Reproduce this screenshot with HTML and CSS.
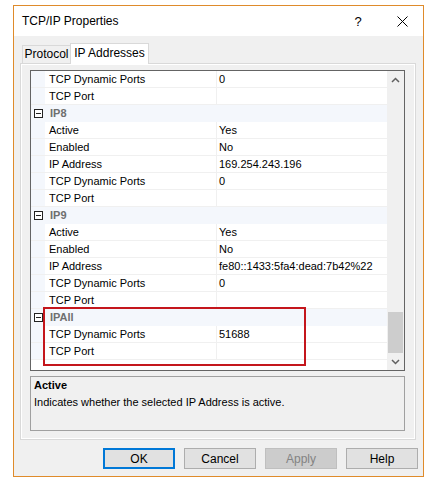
FILE: index.html
```html
<!DOCTYPE html>
<html lang="en">

<head>
    <meta charset="UTF-8" />
    <title>TCP/IP Properties</title>
    <link rel="stylesheet" href="styles.css">
</head>

<body>
    <div class="window">
        <div class="titlebar">
            <span class="title">TCP/IP Properties</span>
            <div class="caption-btn help-btn">?</div>
            <div class="caption-btn close-btn">
                <svg width="11" height="11" viewBox="0 0 11 11">
                    <path d="M0.5 0.5 L10.5 10.5 M10.5 0.5 L0.5 10.5" stroke="#000" stroke-width="1" fill="none" />
                </svg>
            </div>
        </div>

        <div class="dialog">
            <div class="tabs">
                <div class="tab">Protocol</div>
                <div class="tab selected">IP Addresses</div>
            </div>

            <div class="panel">
                <div class="grid">
                    <div class="rows">
                        <div class="row"><div class="gutter"></div><div class="name">TCP Dynamic Ports</div><div class="value">0</div></div>
                        <div class="row"><div class="gutter"></div><div class="name">TCP Port</div><div class="value"></div></div>

                        <div class="row category"><div class="gutter"><svg class="minus" width="9" height="9" viewBox="0 0 9 9"><rect x="0.5" y="0.5" width="8" height="8" fill="#fff" stroke="#222" /><path d="M2 4.5 H7" stroke="#222" /></svg></div><div class="cat-name">IP8</div></div>
                        <div class="row"><div class="gutter"></div><div class="name">Active</div><div class="value">Yes</div></div>
                        <div class="row"><div class="gutter"></div><div class="name">Enabled</div><div class="value">No</div></div>
                        <div class="row"><div class="gutter"></div><div class="name">IP Address</div><div class="value">169.254.243.196</div></div>
                        <div class="row"><div class="gutter"></div><div class="name">TCP Dynamic Ports</div><div class="value">0</div></div>
                        <div class="row"><div class="gutter"></div><div class="name">TCP Port</div><div class="value"></div></div>

                        <div class="row category"><div class="gutter"><svg class="minus" width="9" height="9" viewBox="0 0 9 9"><rect x="0.5" y="0.5" width="8" height="8" fill="#fff" stroke="#222" /><path d="M2 4.5 H7" stroke="#222" /></svg></div><div class="cat-name">IP9</div></div>
                        <div class="row"><div class="gutter"></div><div class="name">Active</div><div class="value">Yes</div></div>
                        <div class="row"><div class="gutter"></div><div class="name">Enabled</div><div class="value">No</div></div>
                        <div class="row"><div class="gutter"></div><div class="name">IP Address</div><div class="value">fe80::1433:5fa4:dead:7b42%22</div></div>
                        <div class="row"><div class="gutter"></div><div class="name">TCP Dynamic Ports</div><div class="value">0</div></div>
                        <div class="row"><div class="gutter"></div><div class="name">TCP Port</div><div class="value"></div></div>

                        <div class="row category"><div class="gutter"><svg class="minus" width="9" height="9" viewBox="0 0 9 9"><rect x="0.5" y="0.5" width="8" height="8" fill="#fff" stroke="#222" /><path d="M2 4.5 H7" stroke="#222" /></svg></div><div class="cat-name">IPAll</div></div>
                        <div class="row"><div class="gutter"></div><div class="name">TCP Dynamic Ports</div><div class="value">51688</div></div>
                        <div class="row"><div class="gutter"></div><div class="name">TCP Port</div><div class="value"></div></div>
                    </div>

                    <div class="scrollbar">
                        <div class="arrow">
                            <svg width="9" height="6" viewBox="0 0 9 6"><path d="M1 5 L4.5 1.5 L8 5" stroke="#606060" stroke-width="1.5" fill="none" /></svg>
                        </div>
                        <div class="track"><div class="thumb"></div></div>
                        <div class="arrow">
                            <svg width="9" height="6" viewBox="0 0 9 6"><path d="M1 1 L4.5 4.5 L8 1" stroke="#606060" stroke-width="1.5" fill="none" /></svg>
                        </div>
                    </div>

                    <div class="highlight"></div>
                </div>

                <div class="description">
                    <div class="desc-title">Active</div>
                    <div class="desc-text">Indicates whether the selected IP Address is active.</div>
                </div>
            </div>

            <div class="buttons">
                <button class="btn default">OK</button>
                <button class="btn">Cancel</button>
                <button class="btn" disabled>Apply</button>
                <button class="btn">Help</button>
            </div>
        </div>
    </div>
</body>

</html>
```

FILE: styles.css
```css
body,
html {
    margin: 0;
    padding: 0;
    background: #fff;
    font-family: "Liberation Sans", Arial, sans-serif;
}

.window {
    box-sizing: border-box;
    width: 411px;
    height: 472px;
    margin: 5px 0 0 13px;
    border: 1px solid #df8b2b;
    display: flex;
    flex-direction: column;
    background: #f0f0f0;
}

.titlebar {
    height: 30px;
    background: #fff;
    display: flex;
    align-items: center;
    flex-shrink: 0;
}

.title {
    flex: 1;
    padding-left: 8px;
    font-size: 12px;
    color: #000;
}

.caption-btn {
    height: 30px;
    display: flex;
    align-items: center;
    justify-content: center;
    font-size: 13px;
}

.help-btn {
    width: 46px;
}

.close-btn {
    width: 42px;
}

.dialog {
    flex: 1;
    padding: 7px 7px 0 6px;
    display: flex;
    flex-direction: column;
}

.tabs {
    display: flex;
    align-items: flex-end;
    height: 20px;
    padding-left: 2px;
}

.tab {
    box-sizing: border-box;
    height: 18px;
    width: 49px;
    border: 1px solid #d9d9d9;
    border-bottom: none;
    font-size: 12px;
    line-height: 17px;
    text-align: center;
    color: #000;
    background: #f0f0f0;
}

.tab.selected {
    position: relative;
    height: 21px;
    width: 79px;
    margin-bottom: -1px;
    margin-left: -1px;
    background: #fff;
    line-height: 18px;
    z-index: 1;
}

.panel {
    box-sizing: border-box;
    height: 377px;
    border: 1px solid #d9d9d9;
    box-shadow: inset 0 0 0 1px #fff;
    padding: 6px 0 0 9px;
}

.grid {
    position: relative;
    box-sizing: border-box;
    width: 375px;
    height: 301px;
    border: 1px solid #646464;
    display: flex;
    background: #fff;
}

.rows {
    width: 356px;
    font-size: 11px;
    color: #000;
}

.row {
    display: flex;
    box-sizing: border-box;
    height: 17px;
    line-height: 16px;
    border-bottom: 1px solid #f0f0f0;
}

.gutter {
    width: 14px;
    background: #f4f7fc;
    display: flex;
    align-items: center;
    justify-content: center;
}

.name {
    box-sizing: border-box;
    width: 172px;
    padding-left: 4px;
    border-right: 1px solid #f0f0f0;
    white-space: nowrap;
}

.value {
    flex: 1;
    padding-left: 2px;
    white-space: nowrap;
}

.row.category {
    background: #f4f7fc;
    border-bottom-color: #f4f7fc;
}

.cat-name {
    padding-left: 5px;
    font-weight: bold;
    color: #6f6f6f;
}

.minus {
    display: block;
}

.scrollbar {
    width: 17px;
    background: #f0f0f0;
    display: flex;
    flex-direction: column;
}

.arrow {
    height: 17px;
    display: flex;
    align-items: center;
    justify-content: center;
}

.track {
    flex: 1;
    display: flex;
    flex-direction: column;
    justify-content: flex-end;
}

.thumb {
    height: 41px;
    margin: 0 1px;
    background: #cdcdcd;
}

.highlight {
    position: absolute;
    left: 12px;
    top: 236px;
    box-sizing: border-box;
    width: 263px;
    height: 59px;
    border: 2px solid #c4161c;
}

.description {
    box-sizing: border-box;
    width: 375px;
    height: 55px;
    margin-top: 5px;
    border: 1px solid #a0a0a0;
    padding-left: 3px;
    font-size: 11px;
    line-height: 17px;
    color: #000;
}

.desc-title {
    font-weight: bold;
}

.buttons {
    display: flex;
    justify-content: flex-end;
    gap: 9px;
    margin-top: 8px;
    margin-right: -2px;
}

.btn {
    box-sizing: border-box;
    width: 72px;
    height: 21px;
    padding: 0;
    border: 1px solid #adadad;
    background: #e1e1e1;
    font-family: "Liberation Sans", Arial, sans-serif;
    font-size: 12px;
    color: #000;
}

.btn.default {
    border: 2px solid #0078d7;
}

.btn:disabled {
    background: #cccccc;
    border-color: #bfbfbf;
    color: #838383;
}
```
